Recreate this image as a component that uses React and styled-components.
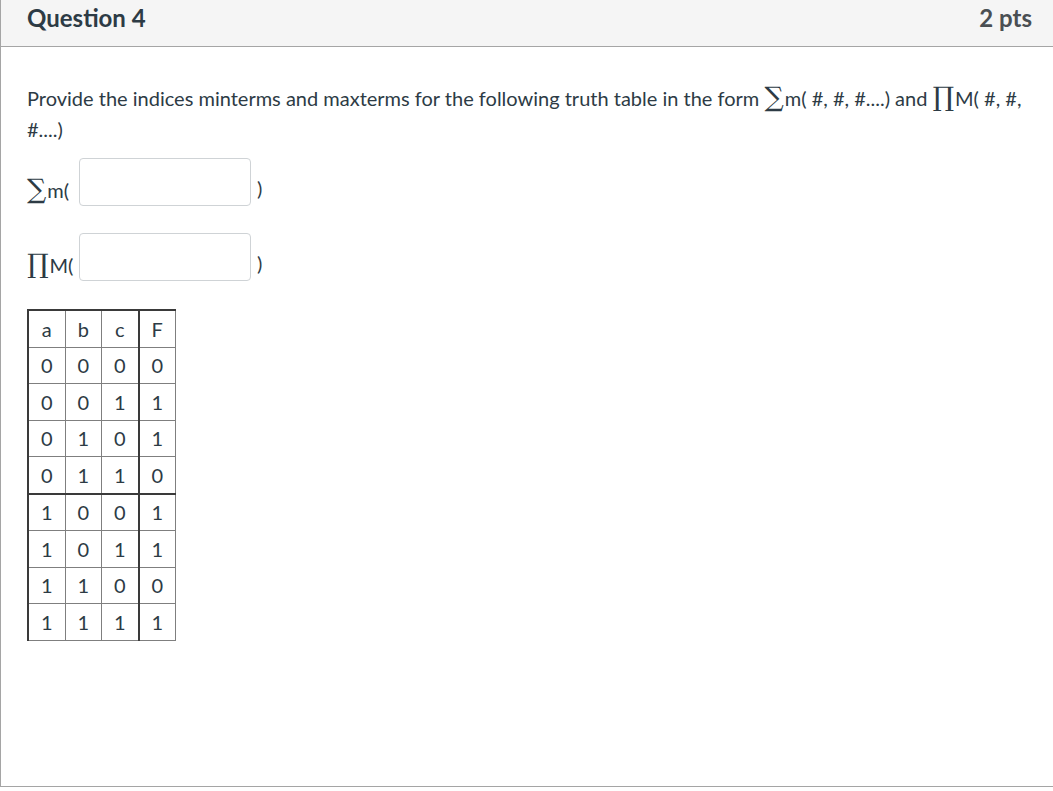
import React from 'react';
import styled, { createGlobalStyle } from 'styled-components';

const GlobalStyle = createGlobalStyle`
  html, body {
    margin: 0;
    padding: 0;
    background: #ffffff;
    overflow: hidden;
  }
  body {
    font-family: Lato, "Open Sans", sans-serif;
    color: #2d3b45;
  }
`;

const rows = [
    ['0', '0', '0', '0'],
    ['0', '0', '1', '1'],
    ['0', '1', '0', '1'],
    ['0', '1', '1', '0'],
    ['1', '0', '0', '1'],
    ['1', '0', '1', '1'],
    ['1', '1', '0', '0'],
    ['1', '1', '1', '1'],
];

const App = () => {
    return (
        <>
            <GlobalStyle />
            <QuestionBox>
                <Header>
                    <Title>Question 4</Title>
                    <Points>2 pts</Points>
                </Header>
                <Body>
                    <Prompt>
                        Provide the indices minterms and maxterms for the following truth table in the form{' '}
                        <Symbol>∑</Symbol>m( #, #, #....) and <Symbol>∏</Symbol>M( #, #, #....)
                    </Prompt>

                    <AnswerRow>
                        <Label><Symbol>∑</Symbol>m(</Label>
                        <AnswerInput type="text" />
                        <Close>)</Close>
                    </AnswerRow>
                    <AnswerRow>
                        <Label><Symbol>∏</Symbol>M(</Label>
                        <AnswerInput type="text" />
                        <Close>)</Close>
                    </AnswerRow>

                    <TruthTable>
                        <tbody>
                            <Row $thickTop>
                                <Cell $thickLeft>a</Cell>
                                <Cell>b</Cell>
                                <Cell>c</Cell>
                                <Cell $thickLeft>F</Cell>
                            </Row>
                            {rows.map((r, i) => (
                                <Row key={i} $thickBottom={i === 3}>
                                    <Cell $thickLeft>{r[0]}</Cell>
                                    <Cell>{r[1]}</Cell>
                                    <Cell>{r[2]}</Cell>
                                    <Cell $thickLeft>{r[3]}</Cell>
                                </Row>
                            ))}
                        </tbody>
                    </TruthTable>
                </Body>
            </QuestionBox>
        </>
    );
}

const QuestionBox = styled.div`
    width: 1070px;
    height: 787px;
    border-left: 1px solid #a5a5a5;
    border-bottom: 1px solid #a5a5a5;
    box-sizing: border-box;
    display: flex;
    flex-direction: column;
    `;

const Header = styled.div`
    height: 47px;
    background: #f5f5f5;
    border-bottom: 1px solid #a5a5a5;
    display: flex;
    align-items: center;
    justify-content: space-between;
    padding: 0 22px 0 26px;
    width: 1053px;
    box-sizing: border-box;
    `;

const Title = styled.h2`
    margin: -12px 0 0 0;
    font-size: 24px;
    font-weight: 700;
    color: #2d3b45;
    `;

const Points = styled.div`
    font-size: 24px;
    font-weight: 700;
    color: #4a4f53;
    margin-top: -12px;
    `;

const Body = styled.div`
    padding: 36px 0 0 26px;
    display: flex;
    flex-direction: column;
    align-items: flex-start;
    `;

const Prompt = styled.p`
    margin: 0 0 13px 0;
    font-size: 20px;
    line-height: 31px;
    width: 1012px;
    `;

const Symbol = styled.span`
    font-family: "DejaVu Serif", "Liberation Serif", serif;
    font-size: 27px;
    line-height: 1;
    margin-right: 1px;
    `;

const AnswerRow = styled.div`
    display: flex;
    align-items: center;
    margin-bottom: 27px;
    font-size: 20px;
    `;

const Label = styled.span`
    width: 52px;
    margin-top: 12px;
    white-space: nowrap;
    line-height: 24px;
    `;

const AnswerInput = styled.input`
    width: 172px;
    height: 48px;
    box-sizing: border-box;
    border: 1px solid #cfd3d6;
    border-radius: 4px;
    background: #ffffff;
    outline: none;
    `;

const Close = styled.span`
    margin-left: 6px;
    margin-top: 12px;
    `;

const TruthTable = styled.table`
    border-collapse: collapse;
    margin-top: 1px;
    font-size: 20px;
    `;

const Row = styled.tr`
    border-top: ${(p) => (p.$thickTop ? '2px solid #3a3a3a' : 'none')};
    border-bottom: ${(p) => (p.$thickBottom ? '2px solid #3a3a3a' : 'none')};
    `;

const Cell = styled.td`
    width: 35.5px;
    height: 35.5px;
    padding: 0;
    text-align: center;
    border: 1px solid #7f7f7f;
    border-left: ${(p) => (p.$thickLeft ? '2px solid #3a3a3a' : '1px solid #7f7f7f')};
    color: #2d3b45;
    `;

export default App;
